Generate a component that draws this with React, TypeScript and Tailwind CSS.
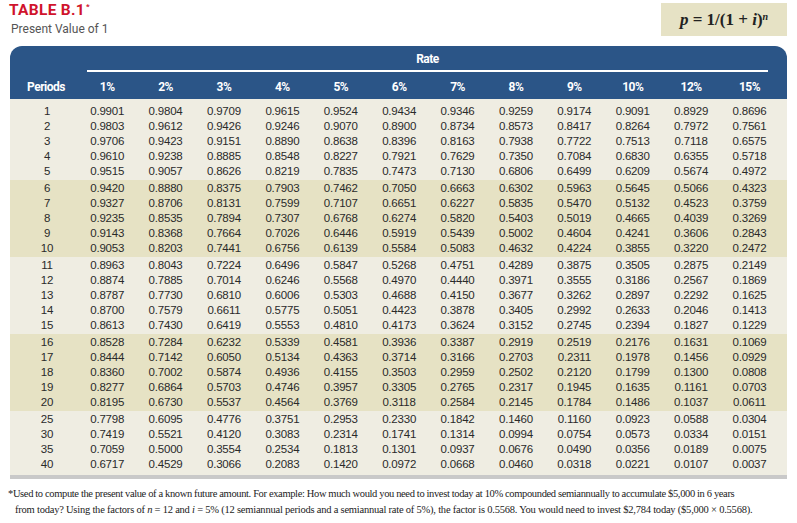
import React from "react";

const rates = ["1%", "2%", "3%", "4%", "5%", "6%", "7%", "8%", "9%", "10%", "12%", "15%"];

// periods grouped by 5, matching the banded rows
const groups: { rows: [string, string][]; shade: boolean }[] = [
  {
    shade: false,
    rows: [
      ["1", "0.9901 0.9804 0.9709 0.9615 0.9524 0.9434 0.9346 0.9259 0.9174 0.9091 0.8929 0.8696"],
      ["2", "0.9803 0.9612 0.9426 0.9246 0.9070 0.8900 0.8734 0.8573 0.8417 0.8264 0.7972 0.7561"],
      ["3", "0.9706 0.9423 0.9151 0.8890 0.8638 0.8396 0.8163 0.7938 0.7722 0.7513 0.7118 0.6575"],
      ["4", "0.9610 0.9238 0.8885 0.8548 0.8227 0.7921 0.7629 0.7350 0.7084 0.6830 0.6355 0.5718"],
      ["5", "0.9515 0.9057 0.8626 0.8219 0.7835 0.7473 0.7130 0.6806 0.6499 0.6209 0.5674 0.4972"],
    ],
  },
  {
    shade: true,
    rows: [
      ["6", "0.9420 0.8880 0.8375 0.7903 0.7462 0.7050 0.6663 0.6302 0.5963 0.5645 0.5066 0.4323"],
      ["7", "0.9327 0.8706 0.8131 0.7599 0.7107 0.6651 0.6227 0.5835 0.5470 0.5132 0.4523 0.3759"],
      ["8", "0.9235 0.8535 0.7894 0.7307 0.6768 0.6274 0.5820 0.5403 0.5019 0.4665 0.4039 0.3269"],
      ["9", "0.9143 0.8368 0.7664 0.7026 0.6446 0.5919 0.5439 0.5002 0.4604 0.4241 0.3606 0.2843"],
      ["10", "0.9053 0.8203 0.7441 0.6756 0.6139 0.5584 0.5083 0.4632 0.4224 0.3855 0.3220 0.2472"],
    ],
  },
  {
    shade: false,
    rows: [
      ["11", "0.8963 0.8043 0.7224 0.6496 0.5847 0.5268 0.4751 0.4289 0.3875 0.3505 0.2875 0.2149"],
      ["12", "0.8874 0.7885 0.7014 0.6246 0.5568 0.4970 0.4440 0.3971 0.3555 0.3186 0.2567 0.1869"],
      ["13", "0.8787 0.7730 0.6810 0.6006 0.5303 0.4688 0.4150 0.3677 0.3262 0.2897 0.2292 0.1625"],
      ["14", "0.8700 0.7579 0.6611 0.5775 0.5051 0.4423 0.3878 0.3405 0.2992 0.2633 0.2046 0.1413"],
      ["15", "0.8613 0.7430 0.6419 0.5553 0.4810 0.4173 0.3624 0.3152 0.2745 0.2394 0.1827 0.1229"],
    ],
  },
  {
    shade: true,
    rows: [
      ["16", "0.8528 0.7284 0.6232 0.5339 0.4581 0.3936 0.3387 0.2919 0.2519 0.2176 0.1631 0.1069"],
      ["17", "0.8444 0.7142 0.6050 0.5134 0.4363 0.3714 0.3166 0.2703 0.2311 0.1978 0.1456 0.0929"],
      ["18", "0.8360 0.7002 0.5874 0.4936 0.4155 0.3503 0.2959 0.2502 0.2120 0.1799 0.1300 0.0808"],
      ["19", "0.8277 0.6864 0.5703 0.4746 0.3957 0.3305 0.2765 0.2317 0.1945 0.1635 0.1161 0.0703"],
      ["20", "0.8195 0.6730 0.5537 0.4564 0.3769 0.3118 0.2584 0.2145 0.1784 0.1486 0.1037 0.0611"],
    ],
  },
  {
    shade: false,
    rows: [
      ["25", "0.7798 0.6095 0.4776 0.3751 0.2953 0.2330 0.1842 0.1460 0.1160 0.0923 0.0588 0.0304"],
      ["30", "0.7419 0.5521 0.4120 0.3083 0.2314 0.1741 0.1314 0.0994 0.0754 0.0573 0.0334 0.0151"],
      ["35", "0.7059 0.5000 0.3554 0.2534 0.1813 0.1301 0.0937 0.0676 0.0490 0.0356 0.0189 0.0075"],
      ["40", "0.6717 0.4529 0.3066 0.2083 0.1420 0.0972 0.0668 0.0460 0.0318 0.0221 0.0107 0.0037"],
    ],
  },
];

export default function App() {
  return (
    <div className="w-[797px] h-[523px] bg-white overflow-hidden">
      <div className="flex justify-between items-start pl-[9px] pr-[10px]">
        <div className="pt-[1px]">
          <div className="font-['Roboto',sans-serif] font-bold text-[15.5px] leading-[18px] text-[#d0132d] tracking-[0.3px]">
            TABLE B.1
            <span className="inline-block align-top text-[8px] leading-[8px] ml-[1px] mt-[2px]">*</span>
          </div>
          <div className="mt-[3px] font-['Roboto',sans-serif] text-[12px] leading-[14px] text-[#555] pl-[2px]">
            Present Value of 1
          </div>
        </div>
        <div className="mt-[3px] w-[126px] h-[33px] bg-[#e6e2c5] flex items-center justify-center font-['Liberation_Serif',serif] font-bold text-[17px] text-[#222]">
          <span>
            <i>p</i> = 1/(1 + <i>i</i>)<sup className="italic text-[10px]">n</sup>
          </span>
        </div>
      </div>

      <div className="mt-[10px] ml-[10px] w-[777px]">
        <div className="bg-[#2b5587] rounded-t-[12px] pt-[6px] pb-[5px] text-white font-['Roboto',sans-serif] font-bold text-[12px] leading-[14px] tracking-[-0.5px]">
          <div className="text-center pl-[58px]">Rate</div>
          <div className="mt-[4px] ml-[77px] w-[681px] h-[1.5px] bg-white" />
          <div className="mt-[8px] grid grid-cols-[68px_repeat(12,58.4px)]">
            <div className="text-center pl-[4px]">Periods</div>
            {rates.map((r) => (
              <div key={r} className="text-center">
                {r}
              </div>
            ))}
          </div>
        </div>

        <div className="font-['Liberation_Sans',sans-serif] text-[11.5px] leading-[15px] text-[#2a2a2a] tracking-[-0.2px]">
          {groups.map((g, gi) => (
            <div
              key={gi}
              className={
                (g.shade ? "bg-[#e6e2c4]" : "bg-[#efede2]") +
                " " +
                (gi === 0 ? "pt-[5px] pb-[1px]" : gi === 4 ? "pt-[1px] pb-[3px]" : "py-[1px]")
              }
            >
              {g.rows.map(([p, vals]) => (
                <div key={p} className="grid grid-cols-[68px_repeat(12,58.4px)] h-[15px]">
                  <div className="text-center pl-[6px]">{p}</div>
                  {vals.split(" ").map((v, i) => (
                    <div key={i} className="text-center">
                      {v}
                    </div>
                  ))}
                </div>
              ))}
            </div>
          ))}
          <div className="h-[4px] bg-[#c9c9c9]" />
        </div>
      </div>

      <div className="mt-[7px] pl-[15px] font-['Liberation_Serif',serif] text-[10.5px] leading-[16px] text-[#222] whitespace-nowrap">
        <p className="indent-[-7px] tracking-[-0.36px]">
          *Used to compute the present value of a known future amount. For example: How much would you need to invest
          today at 10% compounded semiannually to accumulate $5,000 in 6 years
        </p>
        <p className="tracking-[-0.22px]">
          from today? Using the factors of <i>n</i> = 12 and <i>i</i> = 5% (12 semiannual periods and a semiannual rate
          of 5%), the factor is 0.5568. You would need to invest $2,784 today ($5,000 × 0.5568).
        </p>
      </div>
    </div>
  );
}
